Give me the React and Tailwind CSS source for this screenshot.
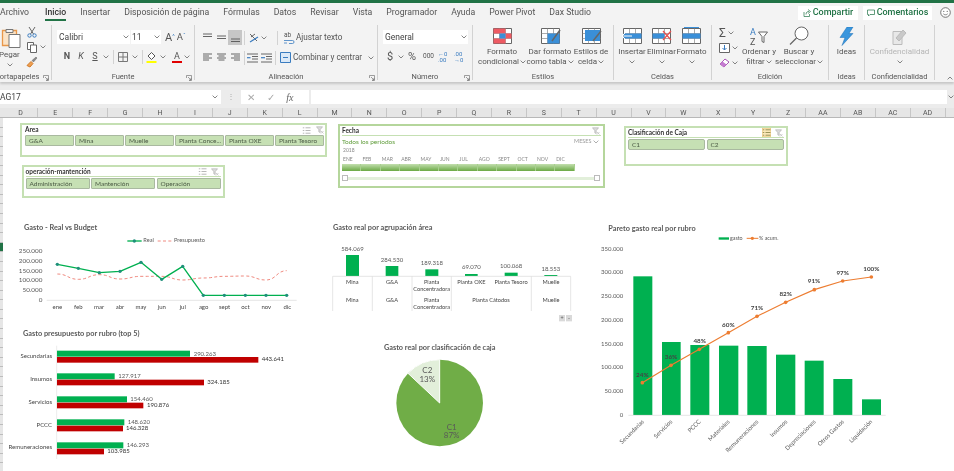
import React from "react";

const GREY = "#595959";
const Chev = ({ className = "", c = "#666" }) => (
  <svg width="6" height="4" viewBox="0 0 6 4" className={"shrink-0 " + className}>
    <path d="M.6.6 3 3 5.4.6" stroke={c} strokeWidth=".8" fill="none" />
  </svg>
);
const Launcher = () => (
  <svg width="6" height="6" viewBox="0 0 6 6" className="absolute right-[2px] -bottom-[1px]">
    <path d="M.5 3V.5H5.5V5.5H3M2 2 5 5M5 3V5H3" stroke="#777" strokeWidth=".7" fill="none" />
  </svg>
);
const Group = ({ className, label, launcher, children, labelClass = "" }) => (
  <div className={"relative shrink-0 flex flex-col h-[55px] border-r border-[#d2d2d2] " + className}>
    <div className="flex-1 min-h-0">{children}</div>
    <div className={"h-[10px] leading-[13px] text-center text-[7.5px] text-[#555] whitespace-nowrap " + labelClass}>{label}</div>
    {launcher && <Launcher />}
  </div>
);
const Sep = ({ className = "" }) => <div className={"w-px h-[14px] bg-[#d2d2d2] shrink-0 " + className} />;

const Lines = ({ rows, sel }) => (
  <div className={"w-[14px] h-[15px] flex items-center justify-center " + (sel ? "bg-[#c6c6c6]" : "")}>
    <svg width="11" height="11" viewBox="0 0 11 11">
      {rows.map(([x, y, w], i) => (
        <path key={i} d={`M${x} ${y}h${w}`} stroke="#555" strokeWidth=".9" />
      ))}
    </svg>
  </div>
);
const TableIcon = ({ children }) => (
  <svg width="21" height="18" viewBox="0 0 21 18">
    <path d="M1.5 1.5h18v15h-18z" fill="#fff" stroke="#666" />
    <path d="M7.5 1.5v15M13.5 1.5v15M1.5 6.5h18M1.5 11.5h18" stroke="#888" strokeWidth=".7" />
    {children}
  </svg>
);
const BigBtn = ({ icon, l1, l2, className = "", disabled }) => (
  <div className={"flex flex-col items-center shrink-0 " + className}>
    <div className="h-[22px] flex items-center justify-center">{icon}</div>
    <div className={"h-[10px] leading-[10px] text-[8px] whitespace-nowrap " + (disabled ? "text-[#b5b5b5]" : "text-[#555]")}>{l1}</div>
    <div className={"h-[10px] leading-[10px] text-[8px] whitespace-nowrap flex items-center gap-[1px] " + (disabled ? "text-[#b5b5b5]" : "text-[#555]")}>
      {l2}<Chev />
    </div>
  </div>
);

const Ribbon = () => (
  <div className="flex h-[60px] bg-[#f3f3f3] pt-[3px] shadow-[0_2px_2px_#c8c8c8] relative">
    <Group className="w-[52px]" launcher label={<span className="block -ml-[5px] text-left">Portapapeles</span>}>
      <div className="flex">
        <div className="w-[26px] flex flex-col items-start">
          <svg width="20" height="21" viewBox="0 0 20 21" className="mt-[2px] ml-[1px]">
            <path d="M1.5 3.5h14v15h-14z" fill="#fbe3c6" stroke="#e8974a" strokeWidth="1.3" />
            <path d="M5 2.5h7v3H5z" fill="#f3f3f3" stroke="#777" />
            <path d="M8 7.5h11v13H8z" fill="#fff" stroke="#777" />
          </svg>
          <div className="text-[8px] leading-[10px] text-[#555] mt-[2px] -ml-[1px]">Pegar</div>
          <Chev className="ml-[7px] mt-[3px]" />
        </div>
        <div className="flex flex-col items-start gap-[3px] mt-[1px]">
          <svg width="12" height="12" viewBox="0 0 12 12"><path d="M3 1l4.5 7M9 1 4.500 8" stroke="#666" fill="none" /><circle cx="3.500" cy="9.500" r="1.700" fill="none" stroke="#3a7cc0" /><circle cx="8.500" cy="9.500" r="1.700" fill="none" stroke="#3a7cc0" /></svg>
          <div className="flex items-center gap-[2px]">
            <svg width="12" height="12" viewBox="0 0 12 12"><path d="M1.500 1.500h6v7h-6z" fill="#fff" stroke="#666" /><path d="M4.500 4h6v7.500h-6z" fill="#fff" stroke="#666" /></svg>
            <Chev />
          </div>
          <svg width="12" height="12" viewBox="0 0 12 12"><path d="M1 9.500 5 5.500l2 2-3 3.500z" fill="#f0a050" stroke="#d07a2a" /><path d="m6 4.500 4-3.500 1 1-3.500 4z" fill="#888" stroke="#666" strokeWidth=".5" /></svg>
        </div>
      </div>
    </Group>

    <Group className="w-[143px]" launcher label="Fuente">
      <div className="flex items-center mt-[5px] h-[14px] pl-[5px]">
        <div className="w-[73px] h-[14px] bg-white flex items-center justify-between pl-[2px] pr-[1px] text-[8.5px] text-[#444]">Calibri<Chev /></div>
        <div className="w-[30px] h-[14px] bg-white ml-px flex items-center justify-between pl-[1px] pr-[1px] text-[8.5px] text-[#444]">11<Chev /></div>
        <span className="ml-[4px] text-[11px] text-[#555] leading-none">A<sup className="text-[#3a7cc0] text-[6px]">^</sup></span>
        <span className="ml-[2px] text-[9.5px] text-[#555] leading-none">A<sup className="text-[#3a7cc0] text-[6px]">ˇ</sup></span>
      </div>
      <div className="flex items-center mt-[6px] h-[14px] pl-[8px] text-[#555] text-[9px]">
        <span className="w-[14px] text-center font-bold">N</span>
        <span className="w-[14px] text-center italic">K</span>
        <span className="w-[14px] text-center underline">S</span>
        <Chev className="ml-[1px]" />
        <Sep className="ml-[4px]" />
        <svg width="12" height="12" viewBox="0 0 12 12" className="ml-[3px]"><path d="M1.500 1.500h9v9h-9zM6 1.500v9M1.500 6h9" stroke="#777" fill="none" /></svg>
        <Chev className="ml-[3px]" />
        <Sep className="ml-[4px]" />
        <svg width="13" height="13" viewBox="0 0 13 13" className="ml-[2px]"><path d="M6.500 1.500 10 5l-3.500 3.500L3 5z" fill="#fff" stroke="#555" /><path d="M1.500 10h10v2h-10z" fill="#ffff00" /></svg>
        <Chev className="ml-[2px]" />
        <div className="ml-[6px] w-[10px] flex flex-col items-center leading-[9px] text-[#555]">A<div className="w-[10px] h-[2px] bg-[#e00000]" /></div>
        <Chev className="ml-[2px]" />
      </div>
    </Group>

    <Group className="w-[183px]" launcher label="Alineación">
      <div className="flex items-center h-[15px] mt-[5px] pl-[5px]">
        <Lines rows={[[1, 2, 9], [1, 4.500, 9]]} />
        <Lines rows={[[1, 4, 9], [1, 6.500, 9]]} />
        <Lines sel rows={[[1, 7, 9], [1, 9.500, 9]]} />
        <Sep className="ml-[2px]" />
        <svg width="12" height="12" viewBox="0 0 12 12" className="ml-[3px]"><path d="M2 2 9 9M3 5l4-3" stroke="#666" fill="none" /><path d="M2 10 10 5" stroke="#3a7cc0" strokeWidth="1.200" /></svg>
        <Chev className="ml-[1px]" />
        <Sep className="ml-[10px]" />
        <svg width="12" height="13" viewBox="0 0 12 13" className="ml-[5px] shrink-0"><text x="1" y="6" fontSize="6.500" fill="#555">ab</text><path d="M1 9.500h8.500a1.500 1.500 0 0 1 0 3H6" fill="none" stroke="#3a7cc0" strokeWidth=".8" /><path d="M1 12h3" stroke="#3a7cc0" strokeWidth=".8" /></svg>
        <span className="ml-[1px] text-[8.200px] text-[#555] whitespace-nowrap">Ajustar texto</span>
      </div>
      <div className="flex items-center h-[15px] mt-[5px] pl-[5px]">
        <Lines rows={[[1, 2, 9], [1, 4, 6], [1, 6, 9], [1, 8, 6]]} />
        <Lines rows={[[1, 2, 9], [2.500, 4, 6], [1, 6, 9], [2.500, 8, 6]]} />
        <Lines rows={[[1, 2, 9], [4, 4, 6], [1, 6, 9], [4, 8, 6]]} />
        <Sep className="ml-[2px]" />
        <svg width="13" height="12" viewBox="0 0 13 12" className="ml-[1px]"><path d="M1 2h11M6 4.500h6M6 7h6M1 10h11" stroke="#666" fill="none" /><path d="M4.500 5.700H1" stroke="#3a7cc0" strokeWidth="1.200" /></svg>
        <svg width="13" height="12" viewBox="0 0 13 12" className="ml-px"><path d="M1 2h11M6 4.500h6M6 7h6M1 10h11" stroke="#666" fill="none" /><path d="M1 5.700h4" stroke="#3a7cc0" strokeWidth="1.200" /></svg>
        <Sep className="ml-[2px]" />
        <svg width="11" height="11" viewBox="0 0 11 11" className="ml-[4px]"><path d="M.5.5h10v10H.5z" fill="#dbe9f7" stroke="#3a7cc0" /><path d="M3 5.500h5" stroke="#3a7cc0" /></svg>
        <span className="ml-[2px] text-[8.200px] text-[#555] whitespace-nowrap">Combinar y centrar</span>
        <Chev className="ml-[6px]" />
      </div>
    </Group>

    <Group className="w-[95px]" launcher label="Número">
      <div className="mt-[5px] ml-[5px] w-[85px] h-[14px] bg-white flex items-center justify-between pl-[2px] pr-[1px] text-[8.5px] text-[#444]">General<Chev /></div>
      <div className="flex items-center mt-[6px] h-[14px] pl-[9px] text-[#555]">
        <span className="text-[11px] w-[7px]">$</span>
        <Chev className="ml-[4px]" />
        <span className="text-[11px] ml-[4px] w-[12px]">%</span>
        <span className="text-[6.500px] ml-[3px]">000</span>
        <span className="text-[6px] leading-[6px] ml-[4px] w-[14px] text-[#3a7cc0]">←0<br />.00</span>
        <span className="text-[6px] leading-[6px] ml-[2px] w-[14px] text-[#3a7cc0]">.00<br />→0</span>
      </div>
    </Group>

    <Group className="w-[141px]" label="Estilos">
      <div className="flex pl-[6px]">
        <BigBtn className="w-[46px]" l1="Formato" l2="condicional" icon={<TableIcon><path d="M7.500 1.500h6v5h-6zM13.500 6.500h6v5h-6zM1.500 11.500h12v5h-12zM1.500 1.500h6v5h-6z" fill="#ee5a63" /><path d="M7.500 6.500h6v5h-6z" fill="#3a8fd8" /></TableIcon>} />
        <BigBtn className="w-[46px] ml-[2px]" l1="Dar formato" l2="como tabla" icon={<TableIcon><path d="M7.500 6.500h12v10h-12z" fill="#3a8fd8" /><path d="M20 3l-8 11" stroke="#666" strokeWidth="1.500" /></TableIcon>} />
        <BigBtn className="w-[36px]" l1="Estilos de" l2="celda" icon={<TableIcon><path d="M4 3h15v11h-15z" fill="#3a8fd8" /><path d="M20 4l-8 10" stroke="#666" strokeWidth="1.500" /></TableIcon>} />
      </div>
    </Group>

    <Group className="w-[98px]" label="Celdas">
      <div className="flex pl-[3.500px]">
        <BigBtn className="w-[29px]" l1="Insertar" icon={<TableIcon><path d="M1.500 6.500h18v5h-18z" fill="#3a8fd8" /><path d="M10 9H0m3-3-3 3 3 3" stroke="#fff" fill="none" /></TableIcon>} />
        <BigBtn className="w-[30px]" l1="Eliminar" icon={<TableIcon><path d="M1.500 6.500h12v5h-12z" fill="#3a8fd8" /><path d="m12 4 8 9m0-9-8 9" stroke="#e85050" strokeWidth="1.200" /></TableIcon>} />
        <BigBtn className="w-[30px]" l1="Formato" icon={<TableIcon><path d="M1.500 6.500h18v5h-18z" fill="#3a8fd8" /><path d="M3 .5h15" stroke="#3a8fd8" /></TableIcon>} />
      </div>
    </Group>

    <Group className="w-[117px]" label="Edición">
      <div className="flex">
        <div className="flex flex-col gap-[2px] pl-[7px] mt-[1px] w-[27px] shrink-0">
          <div className="flex items-center gap-[2px] h-[13px]"><span className="text-[12px] text-[#555] leading-none">Σ</span><Chev /></div>
          <div className="flex items-center gap-[2px] h-[13px]"><svg width="11" height="10" viewBox="0 0 11 10"><path d="M.5.5h10v9H.5z" fill="#fff" stroke="#666" /><path d="M5.500 2v5m-2-2 2 2 2-2" stroke="#3a7cc0" fill="none" /></svg><Chev /></div>
          <div className="flex items-center gap-[2px] h-[13px]"><svg width="11" height="10" viewBox="0 0 11 10"><path d="M1 6 6 1l4 3-5 5z" fill="#fff" stroke="#a855b5" /><path d="M1 6 3.500 3.500l4 3L5 9z" fill="#c47ad0" /></svg><Chev /></div>
        </div>
        <BigBtn className="w-[36px] ml-[2px]" l1="Ordenar y" l2="filtrar" icon={<svg width="20" height="19" viewBox="0 0 20 19"><text x="1" y="8" fontSize="9" fill="#3a7cc0">A</text><text x="1" y="18" fontSize="9" fill="#555">Z</text><path d="M9.500 5h9l-3.500 4.500v6l-2-1v-5z" fill="#fff" stroke="#666" /></svg>} />
        <BigBtn className="w-[44px]" l1="Buscar y" l2="seleccionar" icon={<svg width="20" height="20" viewBox="0 0 20 20"><circle cx="12.500" cy="7.500" r="6.500" fill="#fff" stroke="#666" /><path d="M7.500 12 1 18.500" stroke="#666" strokeWidth="1.200" /></svg>} />
      </div>
    </Group>

    <Group className="w-[36px]" label="Ideas">
      <div className="flex flex-col items-center">
        <div className="h-[22px] flex items-center">
          <svg width="15" height="19" viewBox="0 0 15 19"><path d="M8 0h6L10 6.500h4L3 18.500l3-8H1z" fill="#3a96dd" stroke="#1b6fb5" strokeWidth=".5" /></svg>
        </div>
        <div className="text-[8px] leading-[10px] text-[#555]">Ideas</div>
      </div>
    </Group>

    <Group className="w-[70px]" label="Confidencialidad">
      <BigBtn className="w-full" disabled l1="Confidencialidad" icon={<svg width="15" height="19" viewBox="0 0 15 19"><path d="M1 4.500h9v13H1z" fill="#e8e8e8" stroke="#bbb" /><path d="m4 11 7-8 3 3-7 8z" fill="#c9c9c9" stroke="#bbb" /></svg>} />
    </Group>
    <Chev className="absolute left-[947px] top-[54px] rotate-180" />
  </div>
);

const Filter = ({ className = "" }) => (
  <svg width="8" height="8" viewBox="0 0 8 8" className={"shrink-0 " + className}>
    <path d="M.5.800h6L4.200 3.600v3L2.800 5.800V3.600z" fill="#ddd" stroke="#aaa" strokeWidth=".6" />
    <path d="m5 5 2.500 2.500M7.500 5 5 7.500" stroke="#bbb" strokeWidth=".7" />
  </svg>
);
const Multi = ({ active, className = "" }) => (
  <svg width="9" height="9" viewBox="0 0 9 9" className={"shrink-0 " + className}>
    {active && <path d="M0 0h9v9H0z" fill="#fbe7b8" stroke="#e5b65a" strokeWidth=".6" />}
    <path d="M3.500 1.800h5M3.500 4.500h5M3.500 7.200h5" stroke={active ? "#707030" : "#999"} strokeWidth=".7" />
    <path d="M.8 1.800h1.500M.8 4.500h1.500M.8 7.200h1.500" stroke={active ? "#707030" : "#999"} strokeWidth=".7" />
  </svg>
);
const SlicerBtn = ({ children, className = "" }) => (
  <div className={"h-[11px] flex items-center pl-[3px] rounded-[1px] bg-[#c6e0b4] border border-[#a9b9a0] text-[6.500px] text-[#4a5a44] whitespace-nowrap overflow-hidden " + className}>{children}</div>
);
const months = ["ENE", "FEB", "MAR", "ABR", "MAY", "JUN", "JUL", "AGO", "SEPT", "OCT", "NOV", "DIC"];

const smooth = (pts) => pts.map((p, i) => {
  if (i === 0) return `M${p[0]} ${p[1]}`;
  const a = pts[i - 1];
  const m = (a[0] + p[0]) / 2;
  return `C${m} ${a[1]} ${m} ${p[1]} ${p[0]} ${p[1]}`;
}).join("");

const T = ({ x, y, s = 19, a = "middle", b, c = GREY, children, ...r }) => (
  <text x={x} y={y} fontSize={s} textAnchor={a} dominantBaseline="middle" fontWeight={b ? 700 : 400} fill={c} {...r}>{children}</text>
);

const LineChart = () => {
  const real = [[172, 148], [235, 160], [298, 173], [360, 169], [423, 142], [485, 193], [548, 154], [610, 241], [673, 241], [736, 241], [798, 241], [860, 241]];
  const bud = [[172, 177], [235, 193], [298, 179], [360, 192], [423, 184], [485, 184], [548, 195], [610, 189], [673, 184], [736, 183], [798, 195], [860, 167]];
  const cats = ["ene", "feb", "mar", "abr", "may", "jun", "jul", "ago", "sept", "oct", "nov", "dic"];
  return (
    <svg width="317" height="110" viewBox="9 0 951 330" className="block shrink-0">
      <T x={72} y={38} s={22} a="start" b>Gasto - Real vs Budget</T>
      <path d="M382 78h43" stroke="#00b050" strokeWidth="4" />
      <circle cx="403" cy="78" r="5" fill="#1e8f7a" />
      <T x={430} y={78} s={17} a="start">Real</T>
      <path d="M473 78h42" stroke="#f08a80" strokeWidth="3" strokeDasharray="9 7" />
      <T x={522} y={78} s={17} a="start">Presupuesto</T>
      {["250.000", "200.000", "150.000", "100.000", "50.000", "0"].map((l, i) => (
        <T key={l} x={127} y={110 + i * 29.2} s={19} a="end">{l}</T>
      ))}
      <path d="M140 256h750" stroke="#d9d9d9" strokeWidth="2" />
      <path d={smooth(bud)} stroke="#f08a80" strokeWidth="3" strokeDasharray="9 7" fill="none" />
      <path d={"M" + real.map((p) => p.join(" ")).join("L")} stroke="#00b050" strokeWidth="4" fill="none" strokeLinejoin="round" />
      {real.map((p, i) => <circle key={i} cx={p[0]} cy={p[1]} r="5" fill="#1e8f7a" />)}
      {cats.map((l, i) => <T key={l} x={172 + i * 62.700} y={278} s={18} c="#444">{l}</T>)}
    </svg>
  );
};

const HBars = () => {
  const rows = [
    ["Secundarias", 95, 77, 570, "290.263", 581, 775, "443.641", 785],
    ["Insumos", 163, 145, 344, "127.917", 355, 612, "324.185", 622],
    ["Servicios", 231, 214, 381, "154.460", 391, 430, "190.876", 441],
    ["PCCC", 300, 283, 373, "148.620", 383, 369, "146.328", 378],
    ["Remuneraciones", 368, 352, 370, "146.293", 380, 312, "103.985", 322],
  ];
  return (
    <svg width="317" height="146" viewBox="9 0 951 438" className="block shrink-0">
      <T x={69} y={27} s={22} a="start" b>Gasto presupuesto por rubro (top 5)</T>
      <path d="M170 62v340" stroke="#e3e3e3" strokeWidth="2" />
      {rows.map(([name, mid, top, gx, gl, glx, rx, rl, rlx]) => (
        <g key={name}>
          <T x={156} y={mid} s={18} a="end" c="#444">{name}</T>
          <rect x="171" y={top} width={gx - 171} height="18" fill="#00b050" />
          <rect x="171" y={top + 19} width={rx - 171} height="17" fill="#c00000" />
          <T x={glx} y={top + 10} s={18} a="start">{gl}</T>
          <T x={rlx} y={top + 27} s={18} a="start" c="#333">{rl}</T>
        </g>
      ))}
    </svg>
  );
};

const ColChart = () => {
  const bars = [[78, 117, 120, "584.069", 103], [197, 235, 153, "284.530", 135], [316, 355, 163, "189.318", 145], [435, 473, 177, "69.070", 157], [554, 593, 173, "100.068", 155], [673, 712, 180, "18.553", 164]];
  return (
    <svg width="260" height="120" viewBox="30 0 780 360" className="block shrink-0">
      <T x={39} y={39} s={22} a="start" b>Gasto real por agrupación área</T>
      {bars.map(([a, b, t, l, y]) => (
        <g key={l}>
          <rect x={a} y={t} width={b - a} height={183 - t} fill="#00b050" />
          <T x={(a + b) / 2} y={y} s={18}>{l}</T>
        </g>
      ))}
      <path d="M38 184h714" stroke="#d9d9d9" strokeWidth="2" />
      {[38, 157, 276, 394, 634, 752].map((x) => <path key={x} d={`M${x} 184v104`} stroke="#d9d9d9" strokeWidth="2" />)}
      <T x={97} y={204} s={17} c="#444">Mina</T>
      <T x={216} y={204} s={17} c="#444">G&amp;A</T>
      <T x={335} y={204} s={17} c="#444">Planta</T>
      <T x={335} y={225} s={17} c="#444">Concentradora</T>
      <T x={454} y={204} s={17} c="#444">Planta OXE</T>
      <T x={573} y={204} s={17} c="#444">Planta Tesoro</T>
      <T x={693} y={204} s={17} c="#444">Muelle</T>
      <T x={97} y={256} s={17} c="#444">Mina</T>
      <T x={216} y={256} s={17} c="#444">G&amp;A</T>
      <T x={335} y={256} s={17} c="#444">Planta</T>
      <T x={335} y={277} s={17} c="#444">Concentradora</T>
      <T x={513} y={256} s={17} c="#444">Planta Cátodos</T>
      <T x={693} y={256} s={17} c="#444">Muelle</T>
      <rect x="717" y="300" width="18" height="19" fill="#d9d9d9" />
      <rect x="738" y="300" width="18" height="19" fill="#d9d9d9" />
      <T x={726} y={310} s={16}>+</T>
      <T x={747} y={310} s={16}>-</T>
    </svg>
  );
};

const Pie = () => (
  <svg width="200" height="136" viewBox="0 0 600 408" className="block shrink-0 ml-[20px]">
    <T x={269} y={38} s={22} b>Gasto real por clasificación de caja</T>
    <circle cx="269" cy="204" r="130" fill="#70ad47" />
    <path d="M269 204 174 115A130 130 0 0 1 269 74z" fill="#e2efda" stroke="#fff" strokeWidth="3" />
    <T x={232} y={108} s={24}>C2</T>
    <T x={232} y={134} s={24}>13%</T>
    <T x={305} y={278} s={24}>C1</T>
    <T x={305} y={304} s={24}>87%</T>
  </svg>
);

const Pareto = () => {
  const bars = [[130, 187, 184, "Secundarias", 160], [216, 272, 381, "Servicios", 245], [301, 358, 390, "PCCC", 330], [387, 445, 392, "Materiales", 417], [472, 530, 393, "Remuneraciones", 503], [558, 616, 419, "Insumos", 590], [644, 701, 437, "Depreciaciones", 675], [730, 787, 492, "Otros Gastos", 760], [816, 873, 553, "Liquidación", 845]];
  const line = [[157, 503], [243, 451], [328, 403], [415, 353], [501, 304], [587, 262], [673, 224], [758, 198], [844, 186]];
  const pct = [["24%", 157, 480], ["36%", 243, 428], ["48%", 329, 378], ["60%", 415, 330], ["71%", 501, 281], ["82%", 587, 239], ["91%", 672, 200], ["97%", 758, 174], ["100%", 844, 163]];
  return (
    <svg width="305" height="256" viewBox="45 0 915 768" className="block shrink-0 overflow-visible">
      <T x={55} y={43} s={22} a="start" b>Pareto gasto real por rubro</T>
      <rect x="386" y="67" width="31" height="7" fill="#00b050" />
      <T x={420} y={70} s={16} a="start">gasto</T>
      <path d="M470 70h35" stroke="#ed7d31" strokeWidth="3" />
      <circle cx="487" cy="70" r="5" fill="#ed7d31" />
      <T x={507} y={70} s={16} a="start">% acum.</T>
      {["350.000", "300.000", "250.000", "200.000", "150.000", "100.000", "50.000", "0"].map((l, i) => (
        <T key={l} x={100} y={102 + i * 71.300} s={18} a="end">{l}</T>
      ))}
      {bars.map(([a, b, t]) => <rect key={a} x={a} y={t} width={b - a} height={600 - t} fill="#00b050" />)}
      <path d="M115 601h772" stroke="#d9d9d9" strokeWidth="2" />
      <path d={"M" + line.map((p) => p.join(" ")).join("L")} stroke="#ed7d31" strokeWidth="3.500" fill="none" />
      {line.map((p) => <circle key={p[0]} cx={p[0]} cy={p[1]} r="5.500" fill="#ed7d31" />)}
      {pct.map(([l, x, y]) => <T key={l} x={x} y={y} s={19} b c="#444">{l}</T>)}
      {bars.map(([a, , , n, x]) => (
        <T key={n} x={x} y={618} s={18} a="end" transform={`rotate(-45 ${x} 618)`}>{n}</T>
      ))}
    </svg>
  );
};

const cols = ["D", "E", "F", "G", "H", "I", "J", "K", "L", "M", "N", "O", "P", "Q", "R", "S", "T", "U", "V", "W", "X", "Y", "Z", "AA", "AB", "AC", "AD"];
const tabs = ["Insertar", "Disposición de página", "Fórmulas", "Datos", "Revisar", "Vista", "Programador", "Ayuda", "Power Pivot", "Dax Studio"];

export default function App() {
  return (
    <div className="w-[954px] h-[471px] overflow-hidden bg-white font-['Roboto',sans-serif] blur-[.45px]">
      <div className="h-[3px] bg-[#217346]" />
      <div className="h-[19px] bg-[#f3f3f3] flex items-center relative">
        <div className="flex items-center gap-[14px] text-[8.700px] text-[#555] whitespace-nowrap">
          <span>Archivo</span>
          <span className="ml-[2px] relative font-medium text-[#333]">Inicio<span className="absolute left-0 right-0 -bottom-[2px] h-[2px] bg-[#217346]" /></span>
          {tabs.map((t) => <span key={t}>{t}</span>)}
        </div>
        <div className="ml-auto flex items-center">
          <div className="h-[14px] w-[60px] bg-white flex items-center justify-center gap-[2px] text-[#217346] text-[9px] font-medium">
            <svg width="8" height="8" viewBox="0 0 8 8"><path d="M1 3v4.500h5.500V5M3 5.500C3 3 4.500 2.500 6 2.500M5 .5 7.500 2.500 5 4.500" fill="none" stroke="#217346" strokeWidth=".7" /></svg>
            Compartir
          </div>
          <div className="h-[14px] w-[69px] ml-[5px] bg-white flex items-center justify-center gap-[2px] text-[#217346] text-[9px] font-medium">
            <svg width="8" height="8" viewBox="0 0 8 8"><path d="M.5 1h7v4.500H3L1.500 7V5.500h-1z" fill="none" stroke="#217346" strokeWidth=".7" /></svg>
            Comentarios
          </div>
          <svg width="11" height="11" viewBox="0 0 11 11" className="ml-[8px] mr-[3px]"><circle cx="5.500" cy="5.500" r="4.800" fill="#fff" stroke="#555" strokeWidth=".8" /><circle cx="3.800" cy="4.300" r=".6" fill="#555" /><circle cx="7.200" cy="4.300" r=".6" fill="#555" /><path d="M3.300 6.800c1 1.300 3.400 1.300 4.400 0" fill="none" stroke="#555" strokeWidth=".7" /></svg>
        </div>
      </div>
      <Ribbon />
      <div className="h-[26px] bg-[#ececec] pt-[8px]">
        <div className="flex h-[14px] items-stretch">
          <div className="w-[222px] bg-white flex items-center justify-between pr-[3px] text-[8.500px] text-[#444]">AG17<Chev /></div>
          <div className="w-[20px] flex items-center justify-center text-[#aaa] text-[8px]">⋮</div>
          <div className="w-[68px] bg-white flex items-center text-[#aaa]">
            <span className="ml-[6px] text-[10px]">✕</span>
            <span className="ml-[12px] text-[10px]">✓</span>
            <span className="ml-[11px] text-[10px] italic font-['Liberation_Serif'] text-[#666]">fx</span>
          </div>
          <div className="ml-[2px] w-[638px] bg-white" />
          <Chev className="ml-[1px] self-center" />
        </div>
      </div>
      <div className="h-[10px] bg-[#e6e6e6] flex border-b border-[#b8b8b8] pl-[3.500px]">
        {cols.map((c) => (
          <div key={c} className="w-[34.900px] shrink-0 border-r border-[#c6c6c6] text-center text-[7px] leading-[10px] text-[#555]">{c}</div>
        ))}
      </div>
      <div className="flex h-[353px] font-['Lato',sans-serif] overflow-hidden">
        <div className="w-[3px] shrink-0 bg-[#e6e6e6] flex flex-col">
          {Array.from({ length: 37 }, (_, i) => (
            <div key={i} className={"h-[9.600px] shrink-0 border-b border-[#bdbdbd] " + (i === 13 ? "bg-[#217346]" : "")} />
          ))}
        </div>

        <div className="w-[327px] shrink-0">
          <div className="ml-[17px] mt-[5px] w-[307px] h-[34px] border-2 border-[#c5e0b3] px-[3px]">
            <div className="h-[10px] flex items-center text-[6.500px] font-bold text-[#333]">
              Area<Multi className="ml-auto" /><Filter className="ml-[5px] -mr-[2px]" />
            </div>
            <div className="flex gap-[1.500px]">
              {["G&A", "Mina", "Muelle", "Planta Conce...", "Planta OXE", "Planta Tesoro"].map((t) => <SlicerBtn key={t} className="w-[48.500px] shrink-0">{t}</SlicerBtn>)}
            </div>
          </div>
          <div className="ml-[18.500px] mt-[8px] w-[203px] h-[33px] border-2 border-[#c5e0b3] px-[2px]">
            <div className="h-[10px] flex items-center text-[6.500px] font-bold text-[#333] border-b border-[#c5e0b3] pr-[2px]">
              operación-mantención<Multi className="ml-auto" /><Filter className="ml-[4px]" />
            </div>
            <div className="flex gap-[1.500px] mt-px">
              {["Administración", "Mantención", "Operación"].map((t) => <SlicerBtn key={t} className="flex-1">{t}</SlicerBtn>)}
            </div>
          </div>
          <div className="mt-[17px]"><LineChart /></div>
          <HBars />
        </div>

        <div className="w-[275px] shrink-0">
          <div className="ml-[8px] mt-[6px] w-[266.500px] h-[63.500px] border-2 border-[#b5d69c] px-[2px]">
            <div className="h-[10px] flex items-center justify-between text-[6.500px] font-bold text-[#333] border-b border-[#c5e0b3] pr-[1px]">Fecha<Filter /></div>
            <div className="flex items-center justify-between h-[11px] text-[6.500px] text-[#5f9c3a] pr-[2px]">
              Todos los períodos
              <span className="flex items-center gap-[1px] text-[5.500px] text-[#999]">MESES<Chev c="#999" /></span>
            </div>
            <div className="h-[7px] leading-[7px] text-[5px] text-[#888] pl-[1px]">2018</div>
            <div className="flex mt-[2px] h-[8px] items-center text-[5px] text-[#888]">
              {months.map((m) => <div key={m} className="w-[19.400px] shrink-0 pl-[1px]">{m}</div>)}
            </div>
            <div className="flex h-[7px]">
              {months.map((m) => <div key={m} className="w-[19.400px] shrink-0 bg-linear-to-b from-[#c3dfae] to-[#6ba943] border-r border-[#a8cf8e]" />)}
            </div>
            <div className="flex items-center mt-[4px] h-[6px]">
              <div className="w-[6px] h-[6px] bg-white border border-[#bbb] shrink-0" />
              <div className="flex-1 h-[3px] bg-[#e2efda]" />
              <div className="w-[6px] h-[6px] bg-white border border-[#bbb] shrink-0 mr-[1px]" />
            </div>
          </div>
          <div className="mt-[27.500px]"><ColChart /></div>
          <Pie />
        </div>

        <div className="flex-1 min-w-0">
          <div className="ml-[19px] mt-[8px] w-[163.500px] h-[39.500px] border-2 border-[#c5e0b3] px-[2px]">
            <div className="h-[10px] flex items-center text-[6.500px] font-bold text-[#333] border-b border-[#c5e0b3]">
              Clasificación de Caja<Multi active className="ml-auto" /><Filter className="ml-[4px] mr-[1px]" />
            </div>
            <div className="flex gap-[1.500px] mt-[1px]">
              <SlicerBtn className="flex-1 rounded-[2px]">C1</SlicerBtn>
              <SlicerBtn className="flex-1 rounded-[2px]">C2</SlicerBtn>
            </div>
          </div>
          <div className="mt-[49.500px]"><Pareto /></div>
        </div>
      </div>
    </div>
  );
}
